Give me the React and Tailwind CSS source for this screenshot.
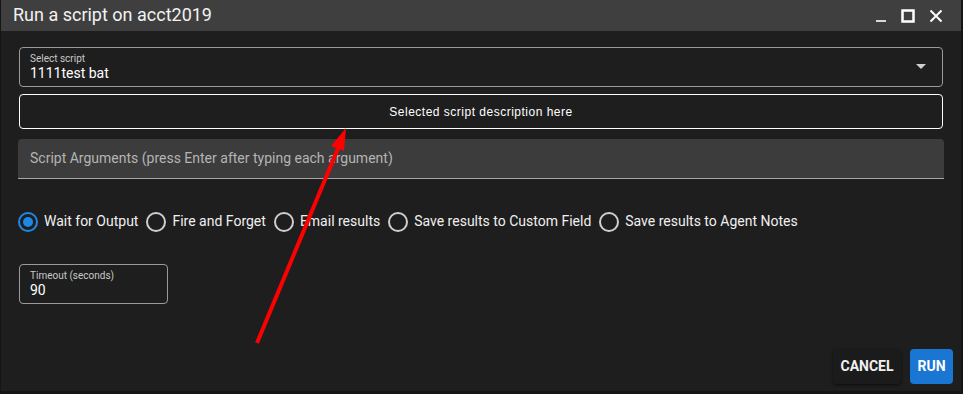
import React from "react";

function Radio({ checked, label }) {
  return (
    <label className="flex items-center gap-[6px] mr-[8px]">
      <span
        className={
          "w-[20px] h-[20px] rounded-full border-2 flex items-center justify-center " +
          (checked ? "border-[#1e88e5]" : "border-[#cfcfcf]")
        }
      >
        {checked && <span className="w-[10px] h-[10px] rounded-full bg-[#1e88e5]" />}
      </span>
      <span className="text-[14px] text-[#f0f0f0]">{label}</span>
    </label>
  );
}

export default function App() {
  return (
    <div className="w-[963px] h-[394px] bg-[#151515] relative overflow-hidden" style={{ fontFamily: "Roboto, 'Liberation Sans', sans-serif" }}>
      <div className="ml-[1px] w-[960px] h-[391px] bg-[#1e1e1e] flex flex-col">
        {/* title bar */}
        <div className="h-[31px] bg-[#3f3f3f] flex items-center pl-[12px] pr-[18px]">
          <div className="text-[18px] text-[#f2f2f2] flex-1 leading-none mt-[-2px]">Run a script on acct2019</div>
          <div className="flex items-center gap-[14px] text-white">
            <svg width="12" height="14" viewBox="0 0 12 14"><rect x="1" y="11" width="10" height="2" fill="#d8d8d8" /></svg>
            <svg width="14" height="14" viewBox="0 0 14 14"><rect x="1.5" y="1.5" width="11" height="11" fill="none" stroke="#fff" strokeWidth="2.5" /></svg>
            <svg width="14" height="14" viewBox="0 0 14 14"><path d="M1.5 1.5L12.5 12.5M12.5 1.5L1.5 12.5" stroke="#fff" strokeWidth="2" /></svg>
          </div>
        </div>
        {/* body */}
        <div className="flex-1 flex flex-col px-[17px] pt-[16px] pb-[7px]">
          <div className="h-[40px] border border-[#9a9a9a] rounded-[4px] flex items-center pl-[10px] pr-[16px] mx-[1px]">
            <div className="flex-1 flex flex-col">
              <span className="text-[10px] leading-[12px] text-[#c8c8c8]">Select script</span>
              <span className="text-[14px] leading-[16px] text-white">1111test bat</span>
            </div>
            <svg width="10" height="6" viewBox="0 0 10 6"><path d="M0 0H10L5 5Z" fill="#cfcfcf" /></svg>
          </div>
          <div className="mt-[7px] h-[35px] border border-white rounded-[4px] flex items-center justify-center mx-[1px]">
            <span className="text-[12px] text-white tracking-[0.5px]" style={{ fontFamily: "'Liberation Sans', Arial, sans-serif" }}>Selected script description here</span>
          </div>
          <div className="mt-[10px] h-[40px] bg-[#3c3c3c] rounded-t-[4px] border-b border-[#a8a8a8] flex items-center pl-[12px]">
            <span className="text-[14px] text-[#b4b4b4]">Script Arguments (press Enter after typing each argument)</span>
          </div>
          <div className="mt-[32px] flex items-center">
            <Radio checked label="Wait for Output" />
            <Radio label="Fire and Forget" />
            <Radio label="Email results" />
            <Radio label="Save results to Custom Field" />
            <Radio label="Save results to Agent Notes" />
          </div>
          <div className="mt-[32px] w-[149px] h-[40px] border border-[#9a9a9a] rounded-[4px] flex flex-col justify-center pl-[10px] ml-[1px]">
            <span className="text-[10px] leading-[12px] text-[#c8c8c8]">Timeout (seconds)</span>
            <span className="text-[14px] leading-[16px] text-white">90</span>
          </div>
          <div className="flex-1" />
          <div className="flex justify-end gap-[9px] mr-[-9px]">
            <button className="h-[35px] w-[68px] rounded-[4px] bg-[#1b1b1b] shadow-[0_1px_3px_rgba(0,0,0,0.6)] text-[14px] font-bold text-[#f0f0f0]">CANCEL</button>
            <button className="h-[35px] w-[43px] rounded-[4px] bg-[#1976d2] text-[14px] font-bold text-white">RUN</button>
          </div>
        </div>
      </div>
      <svg className="absolute left-0 top-0 pointer-events-none" width="963" height="394" viewBox="0 0 963 394">
        <line x1="257" y1="343" x2="339" y2="146" stroke="#ff0000" strokeWidth="4" />
        <path d="M346 128L331 146L344 151Z" fill="#ff0000" />
      </svg>
    </div>
  );
}
